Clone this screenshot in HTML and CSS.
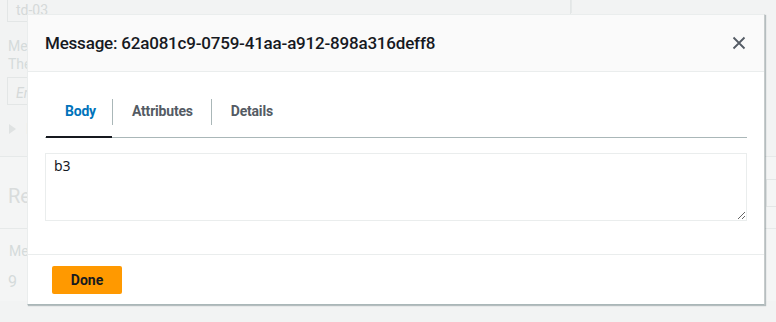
FILE: index.html
```html
<!DOCTYPE html>
<html>
<head>
<meta charset="utf-8">
<link rel="stylesheet" href="styles.css">
</head>
<body>
<div class="page">
  <div class="top-row">
    <div class="left-col">
      <div class="bg-input">td-03</div>
      <div class="bg-label">Message group ID</div>
      <div class="bg-desc">The message group ID</div>
      <div class="bg-input tall"><em>Enter message group ID</em></div>
      <div class="bg-expander"><span class="tri"></span><span>Message attributes</span></div>
    </div>
    <div class="right-col"></div>
  </div>
  <div class="bg-card">
    <div class="bg-card-head">
      <span class="bg-heading">Receive messages</span>
      <span class="bg-btn"></span>
    </div>
    <div class="bg-card-body">
      <div class="bg-label">Messages available</div>
      <div class="bg-num">9</div>
    </div>
  </div>
</div>

<div class="modal" role="dialog">
  <div class="modal-head">
    <h2 class="modal-title">Message: 62a081c9-0759-41aa-a912-898a316deff8</h2>
    <button class="close" aria-label="Close">
      <svg width="14" height="14" viewBox="0 0 14 14"><path d="M1.5 1.5 L12.5 12.5 M12.5 1.5 L1.5 12.5" stroke="#545b64" stroke-width="1.8" fill="none"/></svg>
    </button>
  </div>
  <div class="modal-body">
    <div class="tabs">
      <div class="tab active"><span>Body</span></div>
      <div class="tab"><span>Attributes</span></div>
      <div class="tab"><span>Details</span></div>
    </div>
    <textarea class="body-text">b3</textarea>
  </div>
  <div class="modal-foot">
    <button class="done">Done</button>
  </div>
</div>
</body>
</html>
```

FILE: styles.css
```css
html, body {
  margin: 0;
  padding: 0;
}
body {
  background: #f2f3f3;
  font-family: Roboto, "Noto Sans", Arial, sans-serif;
  width: 776px;
  height: 322px;
  overflow: hidden;
  position: relative;
  color: #d5dbdb;
}
.top-row {
  display: flex;
  height: 156px;
  border-bottom: 1px solid #e6e9e9;
}
.left-col {
  width: 564px;
  padding: 0 0 0 7px;
  white-space: nowrap;
}
.right-col {
  width: 200px;
  height: 13px;
  border-left: 1px solid #e6e9e9;
}
.bg-input {
  border: 1px solid #e3e6e6;
  border-top: none;
  height: 22px;
  line-height: 16px;
  padding: 2px 8px;
  box-sizing: border-box;
  font-size: 14px;
  color: #d5d9d9;
}
.bg-input.tall {
  border-top: 1px solid #e3e6e6;
  height: 28px;
  line-height: 26px;
  margin-top: 4px;
}
.bg-label {
  font-size: 14px;
  margin-top: 15px;
  line-height: 18px;
  padding-left: 1px;
}
.bg-desc {
  font-size: 14px;
  line-height: 18px;
  padding-left: 1px;
}
.bg-expander {
  display: flex;
  align-items: center;
  gap: 10px;
  margin-top: 16px;
  font-size: 14px;
  padding-left: 2px;
}
.tri {
  width: 0;
  height: 0;
  border-left: 7px solid #dfe2e2;
  border-top: 5px solid transparent;
  border-bottom: 5px solid transparent;
}
.bg-card {
  background: #f4f5f5;
}
.bg-card-head {
  height: 71px;
  border-bottom: 1px solid #e6e9e9;
  display: flex;
  align-items: center;
  justify-content: space-between;
  padding-left: 8px;
  white-space: nowrap;
}
.bg-heading {
  font-size: 20px;
  color: #d9dcdc;
  margin-top: 6px;
}
.bg-btn {
  width: 30px;
  height: 26px;
  border: 1px solid #e3e6e6;
  margin-right: -22px;
}
.bg-card-body {
  padding: 10px 8px;
  white-space: nowrap;
}
.bg-card-body .bg-label {
  margin-top: 3px;
}
.bg-num {
  font-size: 16px;
  margin-top: 12px;
}

.modal {
  position: absolute;
  left: 27px;
  top: 14px;
  width: 738px;
  box-sizing: border-box;
  background: #fff;
  border: 1px solid #eaeded;
  border-right-color: #c7cccc;
  border-bottom-color: #aab7b8;
  box-shadow: 1px 1px 1px rgba(0, 28, 36, 0.25);
  color: #16191f;
}
.modal-head {
  background: #fafafa;
  height: 56px;
  border-bottom: 1px solid #eaeded;
  display: flex;
  align-items: center;
  justify-content: space-between;
  padding: 0 18px 0 17px;
}
.modal-title {
  margin: 0 0 1px;
  font-size: 17px;
  letter-spacing: -0.2px;
  font-weight: 500;
  line-height: 22px;
  color: #16191f;
}
.close {
  border: none;
  background: none;
  padding: 0;
  width: 14px;
  height: 14px;
  display: flex;
}
.modal-body {
  padding: 27px 17px 33px 17px;
}
.tabs {
  display: flex;
  border-bottom: 1px solid #aab7b8;
}
.tab {
  position: relative;
  padding-bottom: 12px;
  font-size: 14px;
  font-weight: 700;
  letter-spacing: -0.2px;
  color: #545b64;
}
.tab span {
  display: block;
  line-height: 24px;
  padding: 0 18px 2px 19px;
}
.tab.active span {
  padding: 0 16px 2px 20px;
}
.tab + .tab span {
  border-left: 1px solid #aab7b8;
}
.tab.active {
  color: #0073bb;
}
.tab.active::after {
  content: "";
  position: absolute;
  left: 1px;
  right: 0;
  bottom: -1px;
  height: 2px;
  background: #16191f;
}
.body-text {
  display: block;
  margin-top: 15px;
  width: 100%;
  height: 68px;
  box-sizing: border-box;
  border: 1px solid #eaeded;
  padding: 2px 8px;
  font-family: "Noto Sans", Roboto, Arial, sans-serif;
  font-size: 14px;
  line-height: 20px;
  color: #16191f;
  resize: vertical;
  outline: none;
}
.modal-foot {
  border-top: 1px solid #eaeded;
  padding: 11px 24px 10px;
}
.done {
  display: block;
  width: 70px;
  height: 28px;
  border: none;
  border-radius: 2px;
  background: #ff9900;
  color: #16191f;
  font-family: Roboto, "Noto Sans", Arial, sans-serif;
  font-size: 14px;
  font-weight: 700;
  padding: 0;
}
```
